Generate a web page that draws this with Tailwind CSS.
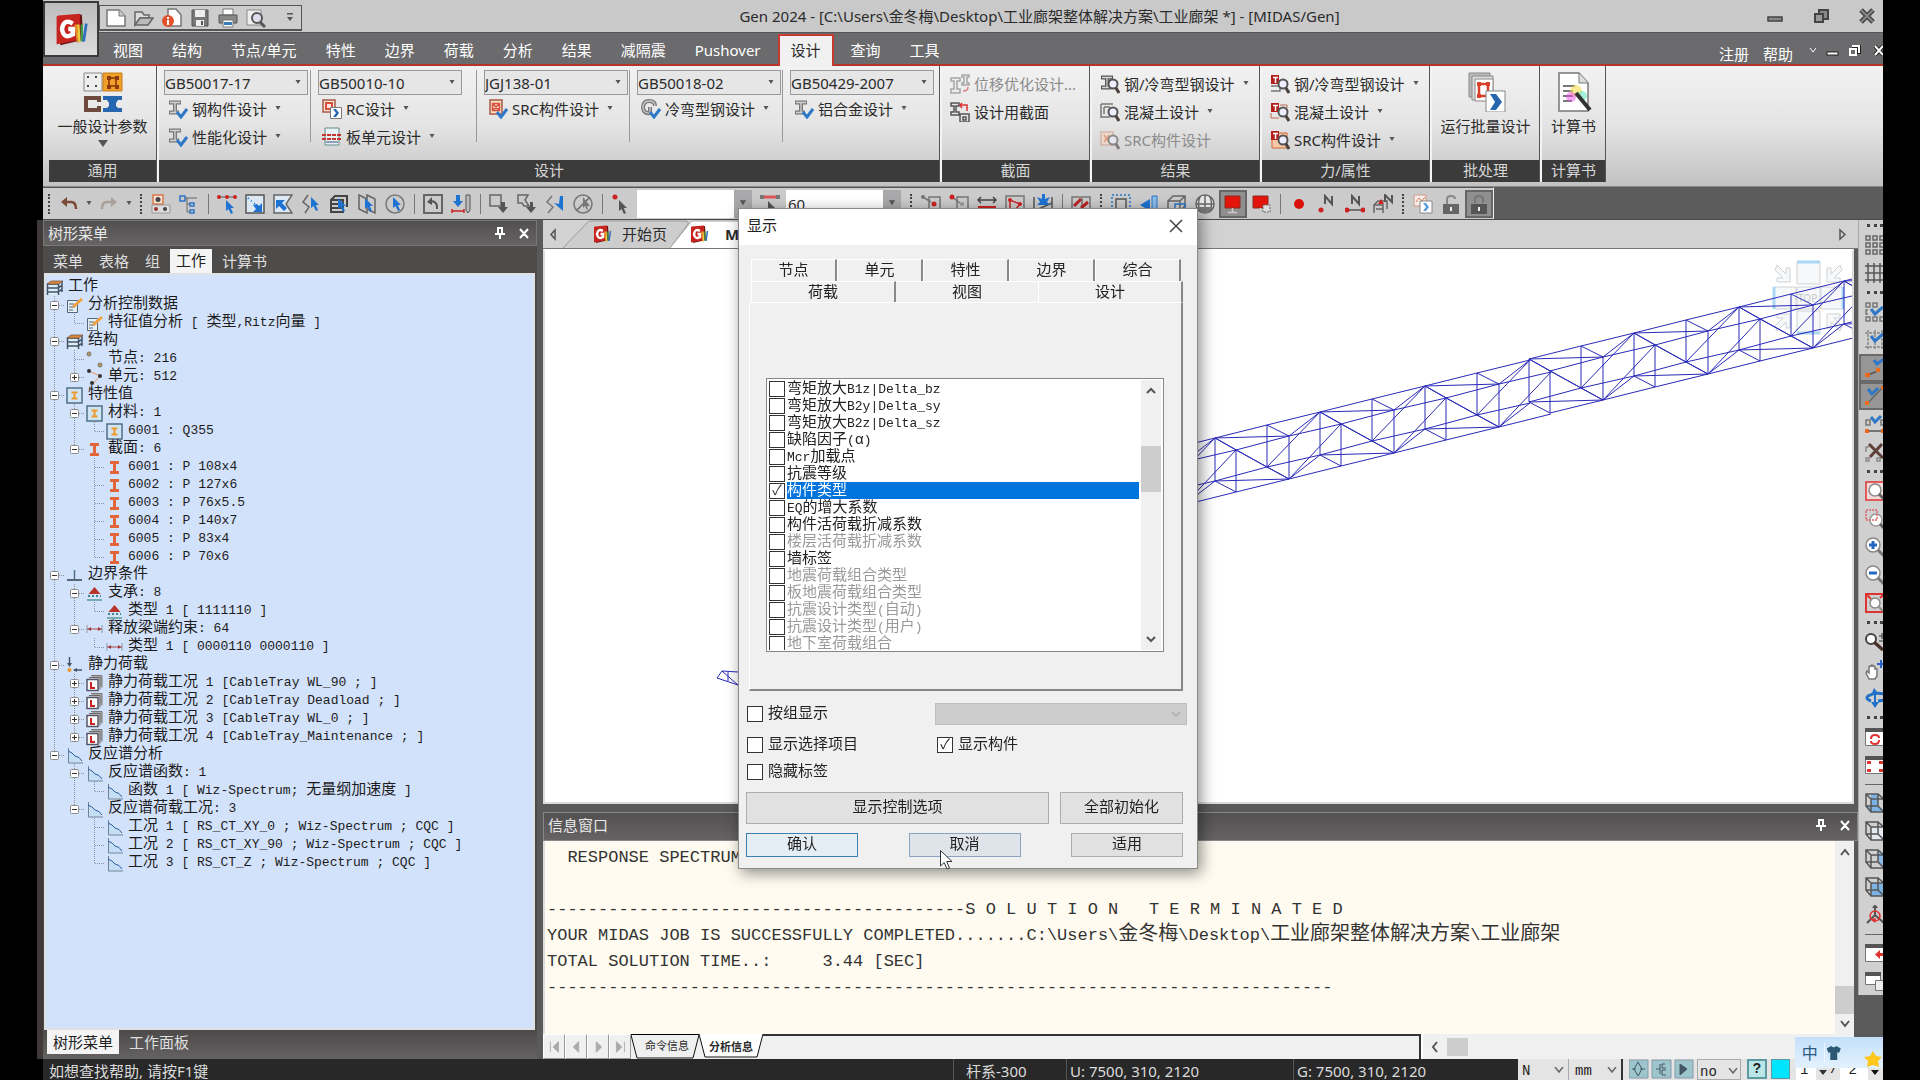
<!DOCTYPE html>
<html lang="zh-CN">
<head>
  <meta charset="UTF-8"/>
  <meta name="viewport" content="width=device-width, initial-scale=1.0"/>
  <title>Gen 2024 - MIDAS/Gen</title>
  <script src="https://cdn.jsdelivr.net/npm/@tailwindcss/browser@4"></script>
</head>
<body class="bg-black h-screen overflow-hidden text-[15px] leading-5 text-[#2b2b2b] [font-family:'Noto_Sans','Noto_Sans_CJK_SC',sans-serif]">
  <div class="h-screen flex flex-col pl-[43px] pr-[37px]">

    <!-- Title bar and menu tabs -->
    <header class="relative shrink-0 bg-[#c9c9c9]">
      <button aria-label="主菜单" class="absolute z-10 left-0 top-px w-[56px] h-14 border-2 border-[#3a3a3a] bg-linear-to-b from-[#bdbdbd] to-[#dcdcdc] flex items-center justify-center">
        <svg data-icon="logo" viewBox="0 0 20 20" class="size-9"></svg>
      </button>
      <div class="h-8 flex items-center">
        <div class="ml-14 mt-1 h-[26px] w-[203px] border border-[#555] border-b-2 flex items-center pl-1.5 gap-2 bg-[#cdcdcd]" id="quick-bar"></div>
        <h1 class="flex-1 text-center pl-3">Gen 2024 - [C:\Users\金冬梅\Desktop\工业廊架整体解决方案\工业廊架 *] - [MIDAS/Gen]</h1>
        <div class="flex gap-[26px] pr-1.5">
          <button aria-label="最小化"><svg data-icon="winmin" viewBox="0 0 20 20" class="size-5"></svg></button>
          <button aria-label="还原"><svg data-icon="winres" viewBox="0 0 20 20" class="size-5"></svg></button>
          <button aria-label="关闭"><svg data-icon="winx" viewBox="0 0 20 20" class="size-5"></svg></button>
        </div>
      </div>
      <nav class="h-[34px] flex items-end gap-px bg-[#6b6b6d] border-t border-[#555] border-b-2 border-b-[#b5342b] text-white pl-14">
        <a href="#" class="px-3.5 pb-1">视图</a>
        <a href="#" class="px-3.5 pb-1">结构</a>
        <a href="#" class="px-3.5 pb-1">节点/单元</a>
        <a href="#" class="px-3.5 pb-1">特性</a>
        <a href="#" class="px-3.5 pb-1">边界</a>
        <a href="#" class="px-3.5 pb-1">荷载</a>
        <a href="#" class="px-3.5 pb-1">分析</a>
        <a href="#" class="px-3.5 pb-1">结果</a>
        <a href="#" class="px-3.5 pb-1">减隔震</a>
        <a href="#" class="px-3.5 pb-1">Pushover</a>
        <a href="#" class="mx-0.5 px-[11px] pt-1 pb-1.5 -mb-0.5 bg-[#f1f1f1] text-[#2b2b2b] border-t-2 border-x-2 border-[#c8392f]">设计</a>
        <a href="#" class="px-3.5 pb-1">查询</a>
        <a href="#" class="px-3.5 pb-1">工具</a>
        <div class="ml-auto flex items-center gap-3.5">
          <a href="#">注册</a>
          <a href="#">帮助</a>
          <svg viewBox="0 0 76 20" class="w-[76px] h-5 -mt-1" fill="none" stroke="#fff" stroke-width="1">
            <path d="M3 6l3 4 3-4"/>
            <rect x="20" y="10" width="11" height="3" fill="#fff" stroke="#222"/>
            <path d="M45 5h7v7" stroke="#222" stroke-width="4"/><path d="M45 4h7v7M43 7h6v6h-6z" stroke-width="2"/>
            <path d="M68 4l8 9M76 4l-8 9" stroke="#222" stroke-width="4"/><path d="M68 4l8 9M76 4l-8 9" stroke-width="2"/>
          </svg>
        </div>
      </nav>
    </header>

    <!-- Ribbon -->
    <section class="shrink-0 flex h-[121px] pl-1.5 pb-1 bg-linear-to-b from-[#f2f2f2] via-[#e4e4e4] to-[#c2c2c2] border-b border-[#8a8a8a]">
      <div class="flex flex-col w-[108px] border-r border-[#555]">
        <button class="flex-1 flex flex-col items-center pt-1.5">
          <svg data-icon="params" viewBox="0 0 40 40" class="size-10"></svg>
          <span class="mt-1">一般设计参数</span>
          <svg viewBox="0 0 10 7" class="w-2.5 h-[7px] mt-1" fill="#555"><path d="M0 0h10L5 7z"/></svg>
        </button>
        <div class="h-[22px] bg-[#3b3b3b] text-[#d5d5d5] text-center">通用</div>
      </div>

      <div class="flex flex-col w-[783px] border-r border-[#555] border-l-2 border-l-[#f4f4f4]">
        <div class="flex-1 flex pt-1" id="design-cols"></div>
        <div class="h-[22px] bg-[#3b3b3b] text-[#d5d5d5] text-center">设计</div>
      </div>

      <div class="flex flex-col w-[150px] border-r border-[#555] border-l-2 border-l-[#f4f4f4]">
        <div class="flex-1 flex flex-col pt-1 pl-2">
          <button class="h-7 flex items-center gap-1 text-[#8b8b8b] whitespace-nowrap"><svg data-icon="opt" viewBox="0 0 20 20" class="size-5 shrink-0 opacity-60"></svg>位移优化设计...</button>
          <button class="h-7 flex items-center gap-1"><svg data-icon="opt2" viewBox="0 0 20 20" class="size-5"></svg>设计用截面</button>
        </div>
        <div class="h-[22px] bg-[#3b3b3b] text-[#d5d5d5] text-center">截面</div>
      </div>

      <div class="flex flex-col w-[170px] border-r border-[#555] border-l-2 border-l-[#f4f4f4]">
        <div class="flex-1 flex flex-col pt-1 pl-2">
          <button class="h-7 flex items-center gap-1"><svg data-icon="resI" viewBox="0 0 20 20" class="size-5"></svg>钢/冷弯型钢设计<svg data-icon="dd" viewBox="0 0 6 8" class="w-1.5 h-2 ml-1"></svg></button>
          <button class="h-7 flex items-center gap-1"><svg data-icon="resC" viewBox="0 0 20 20" class="size-5"></svg>混凝土设计<svg data-icon="dd" viewBox="0 0 6 8" class="w-1.5 h-2 ml-1"></svg></button>
          <button class="h-7 flex items-center gap-1 text-[#8b8b8b]"><svg data-icon="resS" viewBox="0 0 20 20" class="size-5 opacity-60"></svg>SRC构件设计</button>
        </div>
        <div class="h-[22px] bg-[#3b3b3b] text-[#d5d5d5] text-center">结果</div>
      </div>

      <div class="flex flex-col w-[170px] border-r border-[#555] border-l-2 border-l-[#f4f4f4]">
        <div class="flex-1 flex flex-col pt-1 pl-2">
          <button class="h-7 flex items-center gap-1"><svg data-icon="frcI" viewBox="0 0 20 20" class="size-5"></svg>钢/冷弯型钢设计<svg data-icon="dd" viewBox="0 0 6 8" class="w-1.5 h-2 ml-1"></svg></button>
          <button class="h-7 flex items-center gap-1"><svg data-icon="frcC" viewBox="0 0 20 20" class="size-5"></svg>混凝土设计<svg data-icon="dd" viewBox="0 0 6 8" class="w-1.5 h-2 ml-1"></svg></button>
          <button class="h-7 flex items-center gap-1"><svg data-icon="frcS" viewBox="0 0 20 20" class="size-5"></svg>SRC构件设计<svg data-icon="dd" viewBox="0 0 6 8" class="w-1.5 h-2 ml-1"></svg></button>
        </div>
        <div class="h-[22px] bg-[#3b3b3b] text-[#d5d5d5] text-center">力/属性</div>
      </div>

      <div class="flex flex-col w-[110px] border-r border-[#555] border-l-2 border-l-[#f4f4f4]">
        <button class="flex-1 flex flex-col items-center pt-1.5">
          <svg data-icon="batch" viewBox="0 0 40 40" class="size-10"></svg>
          <span class="mt-1">运行批量设计</span>
        </button>
        <div class="h-[22px] bg-[#3b3b3b] text-[#d5d5d5] text-center">批处理</div>
      </div>

      <div class="flex flex-col w-[66px] border-r border-[#555] border-l-2 border-l-[#f4f4f4]">
        <button class="flex-1 flex flex-col items-center pt-1.5">
          <svg data-icon="report" viewBox="0 0 40 40" class="size-10"></svg>
          <span class="mt-1">计算书</span>
        </button>
        <div class="h-[22px] bg-[#3b3b3b] text-[#d5d5d5] text-center">计算书</div>
      </div>
    </section>

    <!-- Icon toolbar -->
    <div class="shrink-0 h-[33px] bg-[#5c5c5c] border-b border-[#4c4c4c] flex">
      <div id="toolbar" class="flex items-center bg-[#cbcbcb] border-r border-[#eee] border-t border-t-[#555]"></div>
    </div>

    <div class="flex-1 min-h-0 flex bg-[#5a5a5a] -ml-1.5 border-l-6 border-[#3f3a38]">
      <!-- Tree panel -->
      <aside class="w-[494px] shrink-0 flex flex-col bg-[#4c4a49]">
        <div class="h-[26px] flex items-center pl-1 pr-1 bg-linear-to-b from-[#525051] to-[#656364] border border-[#777] text-[#e8e8e8]">
          树形菜单
          <svg viewBox="0 0 40 20" class="w-10 h-5 ml-auto" fill="none" stroke="#fff" stroke-width="2"><path d="M5 5h6M6 4v7M10 4v7M3 11h10M8 11v5M28 6l8 9M36 6l-8 9"/></svg>
        </div>
        <div class="h-[27px] flex items-end bg-[#4e4c4a] text-[#dedede] pl-2.5 gap-4">
          <button class="pb-0.5">菜单</button>
          <button class="pb-0.5">表格</button>
          <button class="pb-0.5">组</button>
          <button class="pb-0.5 px-1.5 -mx-1.5 bg-[#f4f4f4] text-[#222] h-6">工作</button>
          <button class="pb-0.5">计算书</button>
        </div>
        <div id="tree" class="flex-1 mx-px mr-0.5 bg-[#d3e2fb] border-2 border-[#dfe0e2] pt-[3px] overflow-hidden text-[#1c1c1c] whitespace-pre [font-family:'Liberation_Mono','Noto_Sans_CJK_SC',monospace]"></div>
        <div class="h-[29px] flex items-start bg-linear-to-b from-[#4d4b4a] to-[#646262] text-[#dedede] pl-1 gap-1">
          <button class="h-6 px-1.5 bg-[#f4f4f4] text-[#222]">树形菜单</button>
          <button class="h-6 px-1.5">工作面板</button>
        </div>
      </aside>

      <main class="ml-1.5 flex-1 min-w-0 flex flex-col">
        <!-- Document tabs -->
        <div class="h-[29px] shrink-0 bg-[#d2d2d2] flex items-center border-b border-[#777]">
          <svg viewBox="0 0 20 20" class="size-5 shrink-0" fill="none" stroke="#555" stroke-width="1.5"><path d="M12 6v9l-4-4.500z"/></svg>
          <button class="relative h-7 w-[127px] shrink-0 flex items-center pl-[29px] gap-2.5">
            <svg viewBox="0 0 127 28" class="absolute inset-0 w-[127px] h-7" fill="#cdcdcd" stroke="#999"><path d="M0 28L24 3q1-2 4-2h94q4 0 3 3l-18 24"/></svg>
            <svg data-icon="logo" viewBox="0 0 20 20" class="relative size-5 shrink-0"></svg><span class="relative">开始页</span>
          </button>
          <button class="relative h-7 w-[160px] shrink-0 flex items-center gap-4 font-bold -ml-5 pl-[19px]">
            <svg viewBox="0 0 160 28" class="absolute inset-0 w-[160px] h-7" fill="#fff" stroke="#aaa"><path d="M0 28L20 3q1-2 4-2h136v27"/></svg>
            <svg data-icon="logo" viewBox="0 0 20 20" class="relative size-5 shrink-0"></svg><span class="relative">M</span>
          </button>
          <svg viewBox="0 0 20 20" class="size-5 ml-auto mr-1.5" fill="none" stroke="#555" stroke-width="1.500"><path d="M8 6v9l5-4.500z"/></svg>
        </div>

        <!-- Model view -->
        <div class="flex-1 min-h-0 bg-white border-2 border-[#dcdcdc] border-t-white mr-1 overflow-hidden">
          <svg id="model" class="block w-full h-full" fill="none"></svg>
        </div>

        <!-- Message window -->
        <div class="h-[29px] shrink-0 mt-2 flex items-center px-1 pb-1 bg-linear-to-b from-[#525051] to-[#656364] border border-[#888] text-[#e8e8e8]">
          信息窗口
          <svg viewBox="0 0 40 20" class="w-10 h-5 ml-auto" fill="none" stroke="#fff" stroke-width="2"><path d="M5 5h6M6 4v7M10 4v7M3 11h10M8 11v5M28 6l8 9M36 6l-8 9"/></svg>
        </div>
        <div class="h-[193px] shrink-0 flex bg-[#fffbf0] border-l-2 border-[#ddd] mr-1">
          <div id="console" class="flex-1 min-w-0 pl-0.5 pt-[3px] text-[20px] leading-[26px] whitespace-pre overflow-hidden text-[#333] [font-family:'Liberation_Mono','Noto_Sans_CJK_SC',monospace]"></div>
          <div class="w-[19px] bg-[#f0f0f0] flex flex-col items-center">
            <svg viewBox="0 0 10 20" class="w-2.5 h-5 mt-px" fill="none" stroke="#555" stroke-width="2"><path d="M1 13l4-5 4 5"/></svg>
            <div class="flex-1"></div>
            <div class="w-full h-7 bg-[#cdcdcd]"></div>
            <svg viewBox="0 0 10 20" class="w-2.5 h-5" fill="none" stroke="#555" stroke-width="2"><path d="M1 7l4 5 4-5"/></svg>
          </div>
        </div>
        <div class="h-[25px] shrink-0 flex items-stretch bg-[#f0f0f0] mr-1 text-[11px] [font-family:'Noto_Sans_CJK_SC',sans-serif]">
          <div class="flex" id="sheet-nav"></div>
          <button class="relative w-[68px] pl-1 pb-1 border-t border-black">
            <svg viewBox="0 0 68 24" class="absolute inset-0 w-[68px] h-6" fill="none" stroke="#111"><path d="M0 0l6 23h56l6-23"/></svg>命令信息
          </button>
          <button class="relative w-[64px] pb-0.5 font-bold">
            <svg viewBox="0 0 64 24" class="absolute inset-0 w-16 h-6" fill="#fff" stroke="#111"><path d="M0 0l6 23h52l6-23"/></svg><span class="relative">分析信息</span>
          </button>
          <div class="flex-1 border-t-2 border-r-2 border-[#333]"></div>
          <div class="w-[433px] border-l-2 border-white flex items-center pl-1">
            <svg viewBox="0 0 20 20" class="size-5" fill="none" stroke="#555" stroke-width="2"><path d="M10 5l-4 5 4 5"/></svg>
            <div class="w-[21px] h-[18px] bg-[#cdcdcd]"></div>
          </div>
        </div>
      </main>

      <!-- View toolbar -->
      <div class="w-[25px] shrink-0 overflow-hidden bg-[#5a5a5a]">
        <div id="side-bar" class="bg-[#d0d0d0] border-l border-[#aaa]"></div>
      </div>
    </div>

    <!-- Status bar -->
    <footer class="shrink-0 h-[21px] bg-[#282828] text-[#dcdcdc] flex leading-6 whitespace-nowrap">
      <div class="flex-1 pl-1.5">如想查找帮助, 请按F1键</div>
      <div class="w-[113px] pl-3 border-l border-[#555]">杆系-300</div>
      <div class="w-[227px] pl-[3px] border-l border-[#555]">U: 7500, 310, 2120</div>
      <div class="w-[225px] pl-[3px] border-l border-[#555]">G: 7500, 310, 2120</div>
      <div class="w-[365px] bg-[#e4e4e4] text-[#222] flex gap-0.5 text-[14px] [font-family:'Liberation_Mono',monospace]">
        <div class="relative w-[51px] border-r border-[#aaa]">
          <select aria-label="力单位" class="appearance-none w-full pl-1 leading-5"><option>N</option></select>
          <svg data-icon="chev" viewBox="0 0 10 6" class="absolute right-1 top-2 w-2.5 h-1.5"></svg>
        </div>
        <div class="relative w-[52px] border-r-2 border-[#333]">
          <select aria-label="长度单位" class="appearance-none w-full pl-1 leading-5"><option>mm</option></select>
          <svg data-icon="chev" viewBox="0 0 10 6" class="absolute right-1 top-2 w-2.5 h-1.5"></svg>
        </div>
        <svg viewBox="0 0 66 20" class="w-[66px] h-5 ml-1 shrink-0" fill="none" stroke="#456">
          <path d="M0 1h19v18H0zM23 1h19v18H23zM46 1h18v18H46z" fill="#9cc6cb" stroke="#89a"/>
          <path d="M9 3l4 7-4 7-4-7zM3 10h4M11 10h5M27 10h4M31 5v10M36 5h-3v4h4M37 11h-4v5h4"/><path d="M51 5l7 5-7 6z" fill="#456"/>
        </svg>
        <div class="relative w-[44px] border border-[#aaa]">
          <select aria-label="捕捉" class="appearance-none w-full pl-0.5 leading-5"><option>no</option></select>
          <svg data-icon="chev" viewBox="0 0 10 6" class="absolute right-0.5 top-2 w-2.5 h-1.5"></svg>
        </div>
        <button class="ml-1 w-5 h-5 border-2 border-[#5c9aa2] bg-[#b9e6e9] font-bold leading-4">?</button>
        <div class="ml-0.5 w-[19px] h-5 bg-[#00e5ff] border border-[#5c9aa2]"></div>
        <input aria-label="当前" value="1" class="w-5 ml-1 bg-white leading-5 pl-1"/>
        <svg viewBox="0 0 10 20" class="w-2.5 h-5" fill="#333"><path d="M1 11h8l-4 5z"/></svg>
        <span class="leading-5">/</span>
        <input aria-label="总数" value="2" class="w-7 bg-white leading-5 pl-2"/>
        <svg viewBox="0 0 10 20" class="w-2.5 h-5" fill="#111"><path d="M1 11h8l-4 5z"/></svg>
      </div>
    </footer>
  </div>

  <!-- Input method bar -->
  <div class="fixed right-[37px] bottom-3 w-[88px] h-[31px] flex items-center bg-linear-to-b from-[#c4e0fb] to-[#e3f1fd] text-[#2b5c86] text-[16px]">
    <span class="w-8 text-center">中</span>
    <svg viewBox="0 0 20 20" class="size-5 border-l border-white/60" fill="#2c5873"><path d="M2 5l5-3q3 3 6 0l5 3-2 5-2-1v9H6V9L4 10z"/></svg>
    <svg viewBox="0 0 20 20" class="size-5 mt-3 ml-5 shrink-0" fill="#ffc61c"><path d="M10 2l3 5 6 1-4 4 1 6-6-2-6 2 1-6-4-4 6-1z"/></svg>
  </div>

  <!-- Display dialog -->
  <form role="dialog" aria-label="显示" class="fixed left-[738px] top-[208px] w-[460px] h-[661px] bg-[#f0f0f0] border border-[#8a8a8a] shadow-[3px_4px_14px_rgba(0,0,0,0.45)] flex flex-col text-[#222] [font-family:'Liberation_Mono','Noto_Sans_CJK_SC',monospace]">
    <div class="h-9 shrink-0 bg-white flex items-center pl-2 pr-3.5 pt-0.5">
      显示
      <button type="button" aria-label="关闭" class="ml-auto -mt-1"><svg viewBox="0 0 14 14" class="size-3.5" fill="none" stroke="#444" stroke-width="1.500"><path d="M1 1l12 12M13 1L1 13"/></svg></button>
    </div>
    <div class="mt-3.5 ml-3 mr-4 flex h-[22px] shrink-0">
      <button type="button" class="flex-1 pt-0.5 border-t border-l border-white border-r-2 border-r-[#888]">节点</button>
      <button type="button" class="flex-1 pt-0.5 border-t border-l border-white border-r-2 border-r-[#888]">单元</button>
      <button type="button" class="flex-1 pt-0.5 border-t border-l border-white border-r-2 border-r-[#888]">特性</button>
      <button type="button" class="flex-1 pt-0.5 border-t border-l border-white border-r-2 border-r-[#888]">边界</button>
      <button type="button" class="flex-1 pt-0.5 border-t border-l border-white border-r-2 border-r-[#888]">综合</button>
    </div>
    <div class="ml-3 mr-3.5 flex h-[21px] shrink-0">
      <button type="button" class="flex-1 pt-0.5 border-t border-l border-white border-r-2 border-r-[#888]">荷载</button>
      <button type="button" class="flex-1 pt-0.5 border-t border-white">视图</button>
      <button type="button" class="flex-1 pt-0.5 border-t border-l border-white border-r-2 border-r-[#888]">设计</button>
    </div>
    <div class="mx-2.5 mr-3.5 h-[389px] shrink-0 border-t border-l border-white border-r-2 border-b-2 border-r-[#888] border-b-[#888] pt-[75px] pl-4 pr-[17px]">
      <div class="h-[274px] border border-[#888] bg-white flex py-px pl-0.5 pr-0.5">
        <div id="items" class="flex-1 overflow-hidden"></div>
        <div class="w-5 bg-[#f0f0f0] flex flex-col items-center">
          <svg viewBox="0 0 10 20" class="w-2.5 h-5" fill="none" stroke="#555" stroke-width="2"><path d="M1 13l4-4 4 4"/></svg>
          <div class="mt-[46px] w-full h-[46px] bg-[#cdcdcd]"></div>
          <div class="flex-1"></div>
          <svg viewBox="0 0 10 20" class="w-2.5 h-5" fill="none" stroke="#555" stroke-width="2"><path d="M1 7l4 4 4-4"/></svg>
        </div>
      </div>
    </div>
    <div class="mt-3 ml-2 mr-2.5 grid grid-cols-[188px_1fr] shrink-0">
      <label class="h-[22px] flex items-center gap-[5px]"><input type="checkbox" class="appearance-none size-4 border border-[#333] bg-white"/><span class="pt-0.5">按组显示</span></label>
      <div class="relative">
        <select disabled aria-label="组" class="appearance-none w-full h-[22px] bg-[#cccccc] border border-[#bfbfbf]"></select>
        <svg viewBox="0 0 10 6" class="absolute right-1.5 top-2 w-2.5 h-1.5" fill="none" stroke="#aaa" stroke-width="1.500"><path d="M1 1l4 4 4-4"/></svg>
      </div>
      <label class="mt-2 h-[23px] flex items-center gap-[5px]"><input type="checkbox" class="appearance-none size-4 border border-[#333] bg-white"/><span class="pt-0.5">显示选择项目</span></label>
      <label class="mt-2 ml-0.5 h-[23px] flex items-center gap-[5px]"><input type="checkbox" checked class="appearance-none size-4 border border-[#333] bg-white text-[14px] leading-[14px] text-center checked:before:content-['✓']"/><span class="pt-0.5">显示构件</span></label>
      <label class="mt-1 h-6 flex items-center gap-[5px]"><input type="checkbox" class="appearance-none size-4 border border-[#333] bg-white"/><span class="pt-0.5">隐藏标签</span></label>
    </div>
    <div class="mt-2 ml-[7px] mr-3.5 flex gap-[11px] shrink-0">
      <button type="button" class="flex-1 h-8 pt-0.5 bg-[#e1e1e1] border border-[#adadad]">显示控制选项</button>
      <button type="button" class="w-[123px] h-8 pt-0.5 bg-[#e1e1e1] border border-[#adadad]">全部初始化</button>
    </div>
    <div class="mt-[9px] ml-[7px] mr-3.5 flex justify-between shrink-0">
      <button type="submit" class="w-28 h-6 pt-0.5 bg-[#e5edf5] border border-[#3c7fb1]">确认</button>
      <button type="button" class="w-28 h-6 pt-0.5 bg-[#dfe4ea] border border-[#8aa4bd]">取消</button>
      <button type="button" class="w-28 h-6 pt-0.5 bg-[#e1e1e1] border border-[#adadad]">适用</button>
    </div>
  </form>
  <svg viewBox="0 0 13 20" class="fixed left-[940px] top-[850px] w-[13px] h-5" fill="#fff" stroke="#333"><path d="M.5.500v15.500l3.700-3.500 2.800 6.500 2.500-1-2.800-6.500h5.300z"/></svg>

  <script>
    const arrow = (x, y, c) => `<path transform="translate(${x} ${y})" fill="${c}" d="M0 0v11l2.500-2 2.500 5 2-1-2.300-5H8z"/>`;
    const beam = c => `<path fill="none" stroke="${c}" stroke-width="4" d="M1 3.500h12M1 13.500h10M7 3v10"/><path fill="none" stroke="#d4d4d4" stroke-width="1.300" d="M2 3.500h10M2 13.500h8M7 3v10"/>`;
    const check = '<path fill="none" stroke="#2f78c8" stroke-width="3" d="M9 13l4 5 6-8"/>';
    const lens = '<circle cx="13" cy="10" r="4.500" fill="#eef" stroke="#555" stroke-width="2"/><path stroke="#4b403c" stroke-width="3" d="M16 14l3 5"/>';
    const tbox = '<path fill="#b3201c" d="M1 1h8v9H1z"/><path stroke="#fff" stroke-width="1.500" d="M3 3.500h5M5.500 3v6"/>';
    const win = '<path fill="#fff" stroke="#777" d="M.5 1.500h19v17H.5z"/><path fill="#555" d="M0 1h20v4H0z"/>';
    const cube = '<path fill="none" stroke="#555" stroke-width="1.500" d="M1 1h12v12H1zM6 6h13v13H6zM1 1l5 5M13 1l6 5M1 13l5 6M13 13l6 6"/>';
    const mon = '<path fill="#e5140a" stroke="#8a2a20" d="M2 2h15v12H2z"/><path stroke="#ccc" stroke-width="1.500" d="M9.500 14v4M5 18.500h9"/>';
    const curve = '<path fill="#c4def5" d="M3 5l3 1 3 4 4 1 3 4H3z"/><path fill="none" stroke="#6f8295" d="M2.500 1v15H17"/><path fill="none" stroke="#2b5f9c" d="M2 4l4 2 3 3 4 1.500 3 3.500"/>';
    const frame = '<path fill="#dcecf8" d="M2 5h11v11H2z"/><path fill="none" stroke="#456" stroke-width="1.500" d="M1.500 16V5h11v11M1.500 9h11M1.500 13h11M16 2v11M12.500 9l3.500-3M12.500 13l3.500-3"/><path fill="#e0863a" stroke="#654" stroke-width=".7" d="M1 5l4-3h12l-4 3z"/>';
    const note = '<path fill="#e6eef6" stroke="#567" d="M1.500 3.500h10v12h-10z"/><path stroke="#567" d="M3 7h5M3 10h6M3 13h4"/><path stroke="#f2a03c" stroke-width="3" d="M7 10l9-8"/>';
    const mat = '<path fill="#cfe4f4" stroke="#4d6f86" stroke-width="1.500" d="M1 1h15v15H1z"/><path fill="#f09a2a" d="M5.500 4.500h6v2H9.500v4h2v2h-6v-2h2v-4h-2z"/>';
    const sup = '<path fill="#b8332a" d="M8.500 2l6 7h-12z"/><path stroke="#3b8a8a" stroke-dasharray="2 2" stroke-width="2" d="M2 11h13"/><path stroke="#5a9a9a" stroke-width="1.500" d="M1 15h15"/>';

    const ICONS = {
      logo: '<path fill="#6e1312" d="M5 3l11-1 1 14L4 19z"/><path fill="#c8241f" d="M2 3.500q0-1 1-1L15 1.500V16L2 18.500z"/><path fill="none" stroke="#fff" stroke-width="2.500" d="M11 7Q6 4 5 10q1 6 6 3v-3H8.500"/><path stroke="#e8902c" stroke-width="1.300" d="M12.500 7.500l1.500 10"/><path stroke="#e8cf3c" stroke-width="1.300" d="M14 7.500l.8 9.500"/><path stroke="#4aa04a" stroke-width="1.300" d="M16 7.500v9.500"/><path stroke="#2f6fc0" stroke-width="1.500" d="M18.500 7l-1.500 10"/>',
      winmin: '<path fill="#888" stroke="#444" stroke-width="1.500" d="M3 11h14v4H3z"/>',
      winres: '<path fill="#888" stroke="#444" stroke-width="2" d="M8 4h9v9H8z"/><path fill="#999" stroke="#444" stroke-width="2" d="M4 8h8v8H4z"/>',
      winx: '<path stroke="#444" stroke-width="5" d="M4 4l12 12M16 4L4 16"/><path stroke="#888" stroke-width="2" d="M4 4l12 12M16 4L4 16"/>',
      newf: '<path fill="#fff" stroke="#777" stroke-width="1.500" d="M1 2h12l6 6v10H1z"/><path fill="#ccc" stroke="#777" d="M13 2v6h6"/>',
      open: '<path fill="#ddd" stroke="#666" stroke-width="1.500" d="M1 17V4h7l2 3h5v3H6z"/><path fill="#bbb" stroke="#666" stroke-width="1.500" d="M1 17L6 10h13l-5 7z"/>',
      info: '<path fill="#fff" stroke="#777" stroke-width="1.500" d="M6 1h8l5 6v11H6z"/><circle cx="6" cy="13" r="6" fill="#e0532b"/><path stroke="#fff" stroke-width="2" d="M6 9v2M6 12v5"/>',
      save: '<path fill="#777" stroke="#555" d="M2 2h16v16H2z"/><path fill="#eee" d="M5 2h10v7H5zM6 12h8v6H6z"/><path fill="#555" d="M11 13h2v4h-2z"/>',
      print: '<path fill="#fff" stroke="#777" d="M5 1h10v6H5z"/><path fill="#888" stroke="#555" d="M1 7h18v8H1z"/><path fill="#fff" stroke="#777" d="M5 12h10v7H5z"/><path fill="#3a78b8" d="M6 14h8v3H6z"/>',
      preview: '<path fill="#eee" stroke="#888" d="M1 2h14v15H1z"/><circle cx="11" cy="10" r="5" fill="#dde" stroke="#555" stroke-width="2"/><path stroke="#555" stroke-width="3" d="M14 14l5 5"/>',
      dd: '<path fill="#555" d="M.5 1h5L3 5z"/>',
      chev: '<path fill="none" stroke="#666" stroke-width="1.500" d="M1 0l4 5 4-5"/>',
      params: '<path fill="#eee" stroke="#888" d="M1 1h18v18H1z"/><path fill="#444" d="M4 4h2v2H4zM12 4h2v2h-2zM4 13h2v2H4zM12 13h2v2h-2z"/><path fill="#f0a028" stroke="#c67e1c" d="M20 1h19v18H20z"/><path fill="none" stroke="#a24a10" stroke-width="2" d="M26 6h7v8h-7z"/><path fill="#8a3a10" d="M24 4h4v4h-4zM32 4h4v4h-4zM24 13h4v4h-4zM32 13h4v4h-4z"/><path fill="none" stroke="#6c4b3c" stroke-width="4" d="M16 30v-4H3v12h13v-4"/><path fill="#2666ae" d="M20 24h19v4h-4l-2 3v3l2 2h4v4H20v-4h4l2-2v-3l-2-3h-4z"/>',
      batch: '<path fill="#bbb" stroke="#888" d="M3 1h21v24H3z"/><path fill="#ddd" stroke="#888" d="M6 4h21v24H6z"/><path fill="#fff" stroke="#888" d="M9 7h18v22H9z"/><path fill="none" stroke="#d8402a" stroke-width="2.500" d="M13 12h9v12h-9z"/><path fill="#d8402a" d="M11 10h4v4h-4zM20 10h4v4h-4zM11 22h4v4h-4z"/><path fill="#fff" stroke="#888" d="M20 19h19v21H20z"/><path fill="#2666ae" d="M24 22h6l6 8-6 8h-6l5-8z"/>',
      report: '<path fill="#fff" stroke="#777" stroke-width="1.500" d="M5 1h20l9 10v28H5z"/><path fill="#ddd" stroke="#777" d="M25 1v10h9"/><path stroke="#777" stroke-width="2" d="M9 14h12M9 19h10M9 24h10M9 29h9"/><circle cx="22" cy="19" r="6" fill="#f5e04c" opacity=".6"/><circle cx="17" cy="25" r="5" fill="#f04cf0" opacity=".5"/><circle cx="28" cy="24" r="5" fill="#4ce0c0" opacity=".5"/><path stroke="#333" stroke-width="4" d="M22 21l14 17"/>',
      steel: beam('#777') + check,
      rc: '<path fill="#fbe5dc" stroke="#a65a44" stroke-width="1.500" d="M1 1h12v12H1z"/><path fill="none" stroke="#d8503a" stroke-width="2" d="M4 4h6v6H4z"/><path fill="#fff" stroke="#777" d="M8.500 8.500h11v11h-11z"/><path fill="#2666ae" d="M11 10h3l3 4-3 4h-3l3-4z"/>',
      slab: '<path fill="#e8f1f7" stroke="#688" d="M3 1h14v17H3z"/><path stroke="#c8302a" stroke-width="2" d="M0 8h20M0 12h20" stroke-dasharray="4 1"/><path stroke="#357" d="M4 15h12"/>',
      src: '<path fill="#fbe0cf" stroke="#a65a44" stroke-width="1.500" d="M2 1h12v14H2z"/><path fill="none" stroke="#d8503a" stroke-width="1.500" d="M5 5l6 6M11 5l-6 6M4.500 4.500h7v7h-7z"/>' + check,
      cold: '<path fill="none" stroke="#777" stroke-width="4" d="M14 7q0-5-6-5-6 0-6 7 1 6 7 5V8"/><path fill="none" stroke="#ccc" stroke-width="1.300" d="M14 7q0-5-6-5-6 0-6 7 1 6 7 5V8"/>' + check,
      opt: '<path fill="none" stroke="#777" stroke-width="1.500" d="M1 4h9v3H7v8h3v4H1v-4h3V7H1zM12 1h7v2h-2v6h2v2h-7V9h2V3h-2z"/><path fill="none" stroke="#d33" stroke-width="1.500" d="M18 13q0 4-5 4"/>',
      opt2: '<path fill="none" stroke="#555" stroke-width="1.500" d="M1 1h8v3H6v6h3v3H1v-3h3V4H1zM10 12h9v8h-9zM13 15h3v3h-3z"/><path fill="none" stroke="#d33" stroke-width="1.500" d="M11 3h6v6M12 1l-2 2 2 3"/>',
      resI: beam('#555') + lens,
      resC: '<path fill="none" stroke="#777" stroke-width="1.500" d="M1 2h12M1 2v13h9M4 5h6M4 5v7"/>' + lens,
      resS: '<path fill="#fbd9c4" stroke="#c98" stroke-width="1.500" d="M1 2h12v13H1z"/><path stroke="#d8703a" stroke-width="1.500" d="M4 5l5 7M9 5l-5 7"/>' + lens,
      frcI: '<path fill="none" stroke="#777" stroke-width="1.500" d="M1 12h8M1 17h9v-3"/>' + tbox + lens,
      frcC: '<path fill="none" stroke="#b65" d="M10 3h7v3M1 11v5h8"/>' + tbox + lens,
      frcS: '<path fill="#f7c9a8" stroke="#c63" d="M2 3h15v15H2z"/>' + tbox + lens,
      undo: '<path fill="none" stroke="#7a4a35" stroke-width="2.500" d="M6 8h6q5 0 5 7"/><path fill="#7a4a35" d="M8 3v10L2 8z"/>',
      redo: '<path fill="none" stroke="#a9a09c" stroke-width="2.500" d="M14 8H8q-5 0-5 7"/><path fill="#a9a09c" d="M12 3v10l6-5z"/>',
      t1: '<path fill="#f7e2d5" stroke="#d87a4a" stroke-width="1.500" d="M2 1h10v9H2z"/><circle cx="7" cy="5.500" r="2.500" fill="#444"/><path fill="#ddd" stroke="#999" d="M1 11h18v8H1z"/><circle cx="5" cy="15" r="2" fill="#933"/><circle cx="14" cy="15" r="2" fill="#444"/>',
      t2: '<path fill="none" stroke="#2a74c8" stroke-width="1.500" d="M1 2h5v5H1zM11 9h4v3h-4zM11 16h4v3h-4z"/><path fill="none" stroke="#666" d="M6 4h12M8 4v14h3M8 10h3"/>',
      t3: '<path stroke="#555" d="M0 3h19"/><circle cx="2" cy="3" r="2" fill="#c22"/><circle cx="10" cy="3" r="2" fill="#c22"/><circle cx="18" cy="3" r="2" fill="#c22"/>' + arrow(9, 6, '#1d72d2'),
      t4: '<path fill="#dce8f4" stroke="#555" stroke-width="1.500" d="M1 1h18v18H1z"/><path stroke="#1d72d2" stroke-width="2" stroke-dasharray="1 3" d="M3 4l9 8"/><path fill="#1d72d2" d="M17 9v9H8l3-3-3-4 4-1 2 2z"/>',
      t5: '<path fill="#dce8f4" stroke="#666" stroke-width="1.500" d="M1 1h18L13 10l6 9H1z"/><path fill="#1d72d2" d="M3 6h9L9 9l5 5-3 3-5-5-3 3z"/>',
      t6: '<path fill="none" stroke="#666" stroke-width="1.500" d="M7 1L2 8l6 5-4 6"/>' + arrow(10, 3, '#1d72d2'),
      t7: '<path fill="none" stroke="#444" stroke-width="2" d="M2 6h12v12H2zM2 10h12M2 14h12M2 6l4-4h12v11"/>' + arrow(9, 4, '#1d72d2'),
      t8: '<path fill="none" stroke="#666" stroke-width="1.500" d="M2 1l8 4v14l-8-4zM10 1l8 4v14l-8-4z"/>' + arrow(8, 4, '#1d72d2'),
      t9: '<circle cx="10" cy="10" r="9" fill="none" stroke="#777" stroke-width="1.500"/>' + arrow(8, 3, '#1d72d2'),
      t10: '<path fill="none" stroke="#666" stroke-width="2" d="M1 1h18v18H1z"/><path fill="none" stroke="#555" stroke-width="2" d="M14 15q1-8-7-8"/><path fill="#555" d="M9 3v8L4 8z"/>',
      t11: '<path fill="#1d72d2" d="M5 1h4v6h3l-5 6-5-6h3z"/><path stroke="#c22" stroke-width="1.500" d="M1 17h12M1 15v4M13 15v4"/><path fill="#bbb" stroke="#555" d="M15 1h4v15l-2 3-2-3z"/>',
      t12: '<path fill="none" stroke="#666" stroke-width="1.500" d="M1 1h11v11H1z"/><path fill="#555" d="M12 8h4v5h3l-5 6-5-6h3z"/>',
      t13: '<path fill="none" stroke="#666" stroke-width="1.500" d="M1 1h10L8 6l4 6H7l-2-3H1z"/><path fill="#555" d="M13 8h3v5h3l-5 6-5-6h4z"/>',
      t14: '<path fill="none" stroke="#777" stroke-width="1.500" d="M7 2L2 8l6 5-5 6"/><path fill="#1d72d2" d="M15 2h3v15l-9-8 5 1z"/>',
      t15: '<circle cx="10" cy="10" r="9" fill="none" stroke="#777" stroke-width="1.500"/><path stroke="#666" stroke-width="1.500" d="M4 16L16 4"/><path fill="#777" d="M10 3v11l2-2 2 4 1-1-1-3h3z"/>',
      t16: '<circle cx="4" cy="3" r="2.500" fill="#c22"/>' + arrow(8, 6, '#555'),
      t17: '<path stroke="#d55" stroke-width="3" d="M2 3h16"/><path fill="#777" d="M0 1h4v4H0zM16 1h4v4h-4z"/>' + arrow(8, 7, '#555'),
      b1: '<path stroke="#777" stroke-width="1.500" d="M2 3l8 5"/><path fill="none" stroke="#777" stroke-width="1.500" d="M8 3h11v14H8z"/><circle cx="13" cy="10" r="2.500" fill="#c22"/><circle cx="2" cy="3" r="2" fill="#777"/>',
      b2: '<path stroke="#777" stroke-width="1.500" d="M3 3l8 6"/><path fill="none" stroke="#777" stroke-width="1.500" d="M8 3h11v14H8z"/><circle cx="13" cy="10" r="2" fill="#999"/><circle cx="3" cy="3" r="2.500" fill="#c22"/>',
      b3: '<path fill="none" stroke="#444" stroke-width="1.500" d="M1 6h18M4 3L1 6l3 3M16 3l3 3-3 3"/><path stroke="#c22" stroke-width="2" d="M1 13h18"/>',
      b4: '<path fill="none" stroke="#777" stroke-width="1.500" d="M1 2h18v16H1z"/><path fill="none" stroke="#c22" stroke-width="1.500" d="M5 15V6l10 4-4 5"/><circle cx="5" cy="6" r="2" fill="#c22"/><circle cx="15" cy="10" r="2" fill="#c22"/>',
      b5: '<path fill="none" stroke="#555" stroke-width="1.500" d="M1 3v14h18V3M1 17l18-8"/><path fill="#1d72d2" d="M9 0h3v5l5-2-3 5 3 3H4l3-3-3-5 5 2z"/>',
      b6: '<path fill="none" stroke="#777" stroke-width="1.500" d="M1 17V3h9M11 17V3h8v14"/><path stroke="#b22" stroke-width="3" d="M3 12l7-7M10 14l7-6"/>',
      b7: '<path fill="none" stroke="#2a74c8" stroke-width="1.500" stroke-dasharray="2 2" d="M1 1h18v16H1z"/><path fill="none" stroke="#555" stroke-width="1.500" d="M5 5h10v10H5z"/>',
      b8: '<path fill="#1d72d2" d="M1 11l10-6v12z"/><path fill="#8bbce8" stroke="#2a74c8" d="M13 2h5v15h-5z"/>',
      b9: '<path fill="none" stroke="#666" stroke-width="1.500" d="M1 7h12v10H1zM1 7l5-5h12v10l-5 5M13 7l5-5"/><path fill="none" stroke="#2a74c8" stroke-width="1.500" d="M8 10h10v7H8z"/>',
      b10: '<circle cx="10" cy="10" r="9" fill="#e8e8e8" stroke="#666" stroke-width="1.500"/><path fill="none" stroke="#666" stroke-width="1.500" d="M1 10h18M10 1v18M5 3q-3 7 0 14M15 3q3 7 0 14"/><path fill="#777" d="M2 13h16l-4 6H6z"/>',
      b11: mon,
      b12: mon + '<path fill="#ddd" stroke="#666" stroke-dasharray="2 1" d="M12 11h7v7h-7z"/>',
      dot: '<circle cx="10" cy="10" r="5" fill="#d8120a"/>',
      n1: '<circle cx="4" cy="16" r="2.500" fill="#c22"/><path fill="none" stroke="#555" stroke-width="2" d="M8 10V2l7 8V2"/>',
      n2: '<path stroke="#555" stroke-width="1.500" d="M2 16h16"/><circle cx="2" cy="16" r="2.500" fill="#c22"/><circle cx="18" cy="16" r="2.500" fill="#c22"/><path fill="none" stroke="#555" stroke-width="2" d="M7 10V2l7 8V2"/>',
      n3: '<path fill="none" stroke="#666" stroke-width="1.500" d="M1 19v-8h9v8M1 11l4-4h9v8M3 15h7"/><path fill="#c22" d="M5 10l3-5 3 5z"/><path fill="none" stroke="#555" stroke-width="2" d="M12 8V1l7 7V1"/>',
      r1: '<path fill="#f6ece8" stroke="#c98" d="M1 1h12v11H1z"/><path fill="none" stroke="#d76" d="M3 8l3-4 3 3 3-4"/><path fill="#fff" stroke="#888" d="M7 7h12v12H7z"/><path fill="#5a9be0" d="M10 9h3l3 4-3 4h-3l3-4z"/>',
      lock1: '<path fill="none" stroke="#888" stroke-width="2" d="M6 10V5q0-3 4-3t4 3"/><path fill="#666" d="M2 10h16v10H2z"/><path stroke="#eee" stroke-width="2" d="M10 13v4"/>',
      lock2: '<path fill="none" stroke="#777" stroke-width="2" d="M6 9V5q0-3 4-3t4 3v4"/><path fill="#555" d="M2 10h16v10H2z"/><path stroke="#eee" stroke-width="2" d="M10 13v4"/>',
      s1: '<path fill="none" stroke="#666" stroke-width="1.500" d="M1 1h4v4H1zM8 1h4v4H8zM15 1h4v4h-4zM1 8h4v4H1zM8 8h4v4H8zM15 8h4v4h-4zM1 15h4v4H1zM8 15h4v4H8zM15 15h4v4h-4z"/>',
      s2: '<path stroke="#555" stroke-width="1.500" d="M3 0v20M9 0v20M15 0v20M0 3h20M0 10h20M0 17h20"/>',
      s3: '<path fill="none" stroke="#777" stroke-width="1.500" d="M1 1h4v4H1zM8 1h4v4H8zM1 15h4v4H1zM8 15h4v4H8zM15 15h4v4h-4zM3 8H1v4h2"/><path fill="none" stroke="#2f78c8" stroke-width="3" d="M6 7l4 5 8-7"/>',
      s4: '<path stroke="#888" stroke-width="1.500" stroke-dasharray="3 1" d="M3 0v20M10 0v20M17 0v20M0 3h20M0 17h20"/><path fill="none" stroke="#2f78c8" stroke-width="3" d="M6 6l4 5 8-7"/>',
      s5: '<path stroke="#555" stroke-width="1.500" d="M3 17l12-5"/><path fill="#f06a1c" d="M0 15h5v4H0zM11 10h4v4h-4z"/><path fill="none" stroke="#2f78c8" stroke-width="3" d="M9 2l3 4 7-5"/>',
      s6: '<path stroke="#666" stroke-width="1.500" d="M2 18L18 1"/><path fill="#f06a1c" d="M0 15h4v4H0zM16 0h4v3h-4z"/><path fill="none" stroke="#2f78c8" stroke-width="3" d="M3 3l4 5 6-6"/>',
      s7: '<path fill="none" stroke="#777" stroke-width="1.500" d="M1 6h4v5H1zM16 6h4v5h-4z"/><path stroke="#555" stroke-width="1.500" d="M1 17h18"/><path fill="#f06a1c" d="M0 15h4v4H0zM16 15h4v4h-4z"/><path fill="none" stroke="#2f78c8" stroke-width="3" d="M6 3l4 5 6-6"/>',
      s8: '<path fill="none" stroke="#888" stroke-width="1.500" d="M1 10V5h3M1 16h3v3H1zM12 16h3v3h-3z"/><path stroke="#5f4038" stroke-width="3" d="M4 2l14 14M17 2L5 15"/>',
      z1: '<path fill="#f6dcd8" stroke="#d33" stroke-width="1.500" d="M1 1h18v18H1z"/><circle cx="10" cy="9" r="6" fill="#fff" stroke="#888" stroke-width="1.500"/><path stroke="#666" stroke-width="3" d="M14 13l5 5"/>',
      z2: '<circle cx="11" cy="11" r="6" fill="#fff" stroke="#999" stroke-width="1.500"/><path fill="none" stroke="#d66" stroke-width="1.500" stroke-dasharray="2 1" d="M1 1h11v10H1z"/><path stroke="#666" stroke-width="3" d="M15 15l5 5"/>',
      z3: '<circle cx="8" cy="8" r="7" fill="#fff" stroke="#888" stroke-width="1.500"/><path stroke="#2666c0" stroke-width="3" d="M4 8h8M8 4v8"/><path stroke="#777" stroke-width="3" d="M13 13l6 6"/>',
      z4: '<circle cx="8" cy="8" r="7" fill="#fff" stroke="#888" stroke-width="1.500"/><path stroke="#2666c0" stroke-width="3" d="M4 8h8"/><path stroke="#777" stroke-width="3" d="M13 13l6 6"/>',
      z5: '<path fill="none" stroke="#d33" stroke-width="2" d="M1 1h18v18H1zM2 2l4 4M18 2l-3 3"/><circle cx="10" cy="10" r="5" fill="#fff" stroke="#888" stroke-width="1.500"/><path stroke="#888" stroke-width="2" d="M14 14l4 4"/>',
      z6: '<circle cx="6" cy="7" r="5" fill="#fff" stroke="#444" stroke-width="2"/><path stroke="#4b332b" stroke-width="3.500" d="M9 10l9 8"/><path stroke="#666" stroke-width="1.500" d="M14 4h6M17 1v6M14 9h5"/>',
      z7: '<path fill="#fff" stroke="#777" stroke-width="1.500" d="M4 19l-3-6 1-2 2 2V7q1-2 2 0V6q1-2 2 0v1q1-2 2 0v2q2-1 2 1v6l-2 3z"/><path stroke="#2666c0" stroke-width="2" d="M12 4h8M16 0v8"/>',
      z8: '<path fill="#2070c8" d="M9 0l4 5h-2v9h3l-4 6-4-6h3V5H7z"/><path fill="none" stroke="#2070c8" stroke-width="3" d="M19 6Q10 4 3 8 0 11 6 13M13 13l6-1"/>',
      w1: win + '<path fill="none" stroke="#d33" stroke-width="2" d="M6 12q0-4 4-4 4 0 4 3M14 13q0 4-4 4-4 0-4-3"/>',
      w2: win + '<path fill="#d33" d="M2 6h4v3H2zM14 6h4v3h-4zM2 14h4v3H2zM14 14h4v3h-4z"/>',
      c1: '<path fill="#7db2e4" d="M6 1h7v12H6zM1 13h12l6 6H6z"/>' + cube,
      c2: '<path fill="#e4eaf0" d="M6 6h13v13H6z"/>' + cube,
      c3: '<path fill="#8cb8e4" d="M13 1l6 5v13l-6-6z"/>' + cube,
      c4: '<path fill="#7db2e4" d="M6 6h13v13H6z"/>' + cube,
      c5: '<path stroke="#555" stroke-width="2" d="M10 1v10M10 10l-8 8M10 10l9 8"/><circle cx="10" cy="11" r="5" fill="none" stroke="#d33" stroke-width="1.500"/><path fill="#555" d="M7 3l3-4 3 4z"/><path fill="#d33" d="M6 14l5-1-1 5z"/>',
      w3: win + '<path fill="#d33" d="M20 10v3h-5v3l-5-4.500 5-4.500v3z"/>',
      w4: '<path fill="#fff" stroke="#777" d="M.5 1.500h15v12H.5z"/><path fill="#555" d="M0 1h16v4H0z"/><path fill="#eee" stroke="#777" d="M10.500 9.500h9v10h-9z"/>',
      frame, note, mat, sup, curve,
      nodes: '<circle cx="3" cy="3" r="2" fill="#b99a62" stroke="#776"/><circle cx="14" cy="14" r="2" fill="#b99a62" stroke="#776"/>',
      elems: '<path fill="none" stroke="#e8965a" d="M3 2l11 5-7 8"/><circle cx="3" cy="2" r="2" fill="#333"/><circle cx="14" cy="7" r="2" fill="#333"/><circle cx="6" cy="14" r="2" fill="#333"/>',
      sec: '<path fill="#e2663a" d="M4 2h9v3h-3v7h3v3H4v-3h3V5H4z"/>',
      bound: '<path stroke="#4d7080" stroke-width="1.500" d="M8.500 3v9"/><path stroke="#567" stroke-width="2" d="M1 13h15"/>',
      rel: '<path stroke="#8a9aa8" d="M1 4v8M16 4v8"/><path stroke="#a44" d="M1 8h15"/><path fill="#933" d="M2 8l3-2v4zM15 8l-3-2v4z"/>',
      load: '<path stroke="#456" stroke-width="1.500" d="M3.500 0v8M8 13h8"/><path fill="#456" d="M1 6h5l-2.500 4zM7 13l4-2v4z"/><circle cx="3.500" cy="13" r="2" fill="#f09a2a"/>',
      lc: '<path fill="#aaa" stroke="#777" d="M5 .500h11v12"/><path fill="#ccc" stroke="#666" d="M3 2.500h11v12"/><path fill="#fff" stroke="#556" stroke-width="1.500" d="M1 4.500h11v11H1z"/><path fill="none" stroke="#c22" stroke-width="2" d="M5 7v6h4"/>'
    };
    document.querySelectorAll('[data-icon]').forEach(el => { el.innerHTML = ICONS[el.dataset.icon]; el.setAttribute('fill', 'none'); });
    const icon = (name, cls = 'size-5') => `<svg viewBox="0 0 20 20" class="${cls}" fill="none">${ICONS[name]}</svg>`;

    document.getElementById('quick-bar').innerHTML =
      ['newf', 'open', 'info', 'save', 'print', 'preview'].map(n => `<button aria-label="${n}">${icon(n)}</button>`).join('') +
      '<svg viewBox="0 0 8 10" class="w-2 h-2.5 ml-3" fill="#555"><path d="M1 0h6v1.500H1zM1 4h6L4 8z"/></svg>';

    // Design code columns
    const columns = [
      ['GB50017-17', [['steel', '钢构件设计'], ['steel', '性能化设计']], 'pl-[5px] pr-0.5 border-r'],
      ['GB50010-10', [['rc', 'RC设计'], ['slab', '板单元设计']], 'pl-[7px] pr-3.5 border-r'],
      ['JGJ138-01', [['src', 'SRC构件设计']], 'pl-[7px] pr-px border-r'],
      ['GB50018-02', [['cold', '冷弯型钢设计']], 'pl-[7px] pr-px border-r'],
      ['GB50429-2007', [['steel', '铝合金设计']], 'pl-[7px]']
    ];
    document.getElementById('design-cols').innerHTML = columns.map(([code, items, edge]) => `
      <div class="h-[72px] border-[#999] ${edge}">
        <div class="relative w-36 h-[25px] border border-[#999] bg-[#e6e6e6]">
          <select aria-label="${code}" class="appearance-none w-full h-full leading-[22px]"><option>${code}</option></select>
          <svg viewBox="0 0 6 8" class="absolute right-1.5 top-2 w-1.5 h-2">${ICONS.dd}</svg>
        </div>
        ${items.map(([ic, label]) => `<button class="h-7 pl-1 flex items-center gap-1">${icon(ic)}${label}<svg viewBox="0 0 6 8" class="w-1.5 h-2 ml-1">${ICONS.dd}</svg></button>`).join('')}
      </div>`).join('');

    // Toolbar: "|" separator, ":" grip, "v" small arrow, "#text" entry box, "*name" pressed
    const tools = [':', 'undo', 'v', 'redo', 'v', ':', 't1', 't2', '|', 't3', 't4', 't5', 't6', 't7', 't8', 't9', '|', 't10', 't11', '|',
      't12', 't13', 't14', 't15', '|', 't16', '#', 't17', '#60', ':', 'b1', 'b2', 'b3', 'b4', 'b5', '|', 'b6', ':',
      'b7', 'b8', 'b9', 'b10', '*b11', 'b12', '|', 'dot', 'n1', 'n2', 'n3', ':', 'r1', 'lock1', '*lock2'];
    document.getElementById('toolbar').innerHTML = tools.map(t => {
      if (t === '|') return '<div class="w-2.5 flex justify-center"><div class="w-px h-5 bg-[#777]"></div></div>';
      if (t === ':') return '<div class="w-3 flex justify-center"><div class="h-5 border-l-2 border-dotted border-[#444]"></div></div>';
      if (t === 'v') return `<button aria-label="更多" class="w-3 flex justify-center"><svg viewBox="0 0 6 8" class="w-1.5 h-2">${ICONS.dd}</svg></button>`;
      if (t[0] === '#') return `<div class="flex ml-0.5 mr-1"><input aria-label="选择" value="${t.slice(1)}" class="w-[97px] h-7 bg-white pl-0.5 leading-5"/><button aria-label="展开" class="w-[18px] h-7 bg-[#a9a9ab] flex items-center justify-center"><svg viewBox="0 0 6 8" class="w-2 h-2.5">${ICONS.dd}</svg></button></div>`;
      if (t[0] === '*') return `<button aria-label="${t.slice(1)}" class="w-7 h-7 flex items-center justify-center bg-[#8f8f8f] border-2 border-[#666]">${icon(t.slice(1))}</button>`;
      return `<button aria-label="${t}" class="w-7 flex justify-center">${icon(t)}</button>`;
    }).join('');

    const side = [':', 's1', 's2', ':', 's3', 's4', '*s5', '*s6', 's7', 's8', ':', 'z1', 'z2', 'z3', 'z4', 'z5', ':', 'z6', 'z7', 'z8', ':',
      'w1', 'w2', '|', 'c1', 'c2', 'c3', 'c4', 'c5', '|', 'w3', 'w4'];
    document.getElementById('side-bar').innerHTML = side.map(t => {
      if (t === ':') return '<div class="h-[11px] flex items-center pl-2"><div class="w-4 border-t-3 border-dotted border-[#444]"></div></div>';
      if (t === '|') return '<div class="h-2.5 flex items-center pl-1.5"><div class="w-5 h-px bg-[#666]"></div></div>';
      if (t[0] === '*') return `<button aria-label="${t.slice(1)}" class="h-7 w-8 pl-1 flex items-center bg-[#969696] border-2 border-[#6a6a6a]">${icon(t.slice(1), 'size-5 shrink-0')}</button>`;
      return `<button aria-label="${t}" class="h-7 w-8 pl-1.5 flex items-center">${icon(t, 'size-5 shrink-0')}</button>`;
    }).join('');

    document.getElementById('sheet-nav').innerHTML = ['M5 3v12M14 3L8 9l6 6z', 'M12 3L6 9l6 6z', 'M7 3l6 6-6 6z', 'M5 3l6 6-6 6zM14 3v12'].map(d =>
      `<button aria-label="翻页" class="w-[22px] border border-[#999] border-l-white border-t-white flex items-center justify-center"><svg viewBox="0 0 18 18" class="size-4" fill="#aaa" stroke="#aaa">
      <path d="${d}"/></svg></button>`).join('');

    // Half-width runs are set smaller than the Chinese characters around them
    const mix = (text, cls) => text.replace(/[\x20-\x7e]+/g, run => `<span class="${cls}">${run}</span>`);

    // Tree rows: level, icon, label, "+" or "-" for an expander
    const rows = [
      [0, 'frame', '工作'],
      [1, 'note', '分析控制数据', '-'], [2, 'note', '特征值分析 [ 类型,Ritz向量 ]'],
      [1, 'frame', '结构', '-'], [2, 'nodes', '节点: 216'], [2, 'elems', '单元: 512', '+'],
      [1, 'mat', '特性值', '-'], [2, 'mat', '材料: 1', '-'], [3, 'mat', '6001 : Q355'],
      [2, 'sec', '截面: 6', '-'], [3, 'sec', '6001 : P 108x4'], [3, 'sec', '6002 : P 127x6'], [3, 'sec', '6003 : P 76x5.5'],
      [3, 'sec', '6004 : P 140x7'], [3, 'sec', '6005 : P 83x4'], [3, 'sec', '6006 : P 70x6'],
      [1, 'bound', '边界条件', '-'], [2, 'sup', '支承: 8', '-'], [3, 'sup', '类型 1 [ 1111110 ]'],
      [2, 'rel', '释放梁端约束: 64', '-'], [3, 'rel', '类型 1 [ 0000110 0000110 ]'],
      [1, 'load', '静力荷载', '-'],
      [2, 'lc', '静力荷载工况 1 [CableTray WL_90 ; ]', '+'], [2, 'lc', '静力荷载工况 2 [CableTray Deadload ; ]', '+'],
      [2, 'lc', '静力荷载工况 3 [CableTray WL_0 ; ]', '+'], [2, 'lc', '静力荷载工况 4 [CableTray_Maintenance ; ]', '+'],
      [1, 'curve', '反应谱分析', '-'], [2, 'curve', '反应谱函数: 1', '-'], [3, 'curve', '函数 1 [ Wiz-Spectrum; 无量纲加速度 ]'],
      [2, 'curve', '反应谱荷载工况: 3', '-'],
      [3, 'curve', '工况 1 [ RS_CT_XY_0 ; Wiz-Spectrum ; CQC ]'], [3, 'curve', '工况 2 [ RS_CT_XY_90 ; Wiz-Spectrum ; CQC ]'],
      [3, 'curve', '工况 3 [ RS_CT_Z ; Wiz-Spectrum ; CQC ]']
    ];
    const continues = (i, level) => {
      for (let j = i + 1; j < rows.length; j++) {
        if (rows[j][0] < level) return false;
        if (rows[j][0] === level) return true;
      }
      return false;
    };
    document.getElementById('tree').innerHTML = rows.map(([level, ic, label, exp], i) => {
      let cells = '';
      for (let k = 1; k <= level; k++) {
        const more = continues(i, k);
        let d = more ? 'M8.500 0v18' : (k === level ? 'M8.500 0v9' : '');
        if (k === level) d += 'M9 9.500h10';
        cells += `<svg viewBox="0 0 20 18" class="w-5 h-[18px] shrink-0" fill="none"><path d="${d}" stroke="#8b93a0" stroke-dasharray="1 1"/>` +
          (k === level && exp ? `<rect x="4.500" y="5.500" width="8" height="8" rx="1" fill="#fff" stroke="#8c8c8c"/><path stroke="#333" d="M6 9.500h5${exp === '+' ? 'M8.500 7v5' : ''}"/>` : '') + '</svg>';
      }
      return `<div class="h-[18px] leading-[18px] flex items-center">${cells}<svg viewBox="0 0 17 17" class="size-[17px] shrink-0 mr-[5px]" fill="none">${ICONS[ic]}</svg><span>${mix(label, 'text-[13px]')}</span></div>`;
    }).join('');

    // Display options
    const options = ['弯矩放大B1z|Delta_bz', '弯矩放大B2y|Delta_sy', '弯矩放大B2z|Delta_sz', '缺陷因子(α)', 'Mcr加载点', '抗震等级', '构件类型',
      'EQ的增大系数', '构件活荷载折减系数', '楼层活荷载折减系数', '墙标签', '地震荷载组合类型', '板地震荷载组合类型', '抗震设计类型(自动)', '抗震设计类型(用户)', '地下室荷载组合'];
    const disabled = [9, 11, 12, 13, 14, 15];
    document.getElementById('items').innerHTML = options.map((o, i) => `
      <label class="flex h-[17px] leading-[19px] ${disabled.includes(i) ? 'text-[#9a9a9a]' : ''}">
        <input type="checkbox" ${i === 6 ? 'checked' : ''} class="appearance-none size-4 mt-px mr-0.5 border border-[#333] bg-white text-[#333] text-[14px] leading-[14px] text-center checked:before:content-['✓']"/>
        <span class="flex-1 mr-0.5 ${i === 6 ? 'bg-[#0073dc] text-white' : ''}">${mix(o, 'text-[13px]')}</span>
      </label>`).join('');

    document.getElementById('console').innerHTML = [
      '  RESPONSE SPECTRUM', '',
      '-'.repeat(41) + 'S O L U T I O N   T E R M I N A T E D',
      'YOUR MIDAS JOB IS SUCCESSFULLY COMPLETED.......C:\\Users\\金冬梅\\Desktop\\工业廊架整体解决方案\\工业廊架',
      'TOTAL SOLUTION TIME..:     3.44 [SEC]',
      '-'.repeat(77)
    ].map(l => `<div class="h-[26px]">${mix(l, 'text-[17px]')}</div>`).join('');

    // Truss bays
    const bay = 'M0 0L52-13 105-26M21 12L74-2 126-14M0 43L52 29 105 17M21 54L74 41 126 28M0 0V43M52-13V29M21 12V54M74-2V41' +
      'M0 0L74-2M0 43L74 41M52-13L74-2M0 43L21 54M0 0L21 12M52 29L74 41M0 0L52 29M21 12L74 41M74-2L105-26M52 29L105-26M74 41L126-14M74 41L105 17';
    let truss = '';
    for (let k = -4; k < 7; k++) {
      truss += `<path transform="translate(${Math.round(670 + 104.75 * k)} ${Math.round(187 - 26.25 * k)})" d="${bay}"/>`;
    }
    document.getElementById('model').innerHTML = `
      <g stroke="#cfd3d6" fill="#f6f8fa">
        <path d="M1252 11h23v22h-23zM1229 36h22v22h-22zM1276 36h22v22h-22zM1252 60h23v22h-23zM1252 36h23v22h-23z"/>
        <path d="M1232 14l9 9v-6h4v14h-13v-4h6l-8-8zM1295 14l-9 9v-6h-4v14h13v-4h-6l8-8zM1232 80l9-9v6h4V63h-13v4h6l-8 8zM1295 80l-9-9v6h-4V63h13v4h-6l8 8z"/>
        <path d="M1252 11h23M1229 36v22M1298 36v22M1252 82h23" stroke="#a9d6f5" stroke-width="3"/>
      </g>
      <text x="1253" y="51" fill="#c3c7ca" font-size="10">TOP</text>
      <g stroke="#2a2ab8">${truss}</g>
      <path stroke="#2a2ab8" d="M172 427l5-7 16 1M172 427l21 7M177 420l16 14M183 421v9"/>`;
  </script>
</body>
</html>
